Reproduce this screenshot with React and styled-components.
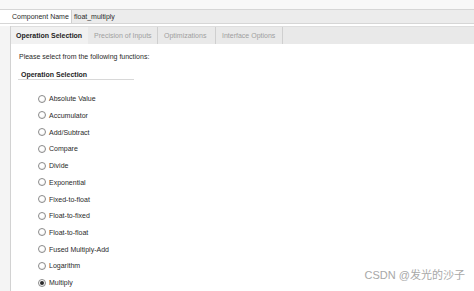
import React from "react";
import styled, { createGlobalStyle } from "styled-components";

const Global = createGlobalStyle`
  html, body { margin: 0; padding: 0; background: #ffffff; }
  body { font-family: "Liberation Sans", Arial, sans-serif; overflow: hidden; }
  * { box-sizing: border-box; }
`;

const Page = styled.div`
  position: relative;
  width: 474px;
  height: 291px;
  display: flex;
  flex-direction: column;
  background: #ffffff;
  overflow: hidden;
`;

const TopStrip = styled.div`
  height: 10px;
  background: #f8f8f8;
`;

const NameRow = styled.div`
  height: 15px;
  display: flex;
  align-items: stretch;
  border-top: 1px solid #d6d6d6;
  border-bottom: 1px solid #d6d6d6;
`;

const NameLabel = styled.div`
  width: 71px;
  padding-left: 12px;
  font-size: 7px;
  line-height: 13px;
  color: #2a2a2a;
  background: #ffffff;
  white-space: nowrap;
`;

const NameInput = styled.div`
  flex: 1;
  background: #ececec;
  border-left: 1px solid #d0d0d0;
  padding-left: 2px;
  font-size: 7px;
  line-height: 13px;
  color: #2a2a2a;
`;

const Spacer = styled.div`
  height: 2px;
`;

const Body = styled.div`
  flex: 1;
  display: flex;
`;

const Gutter = styled.div`
  width: 11px;
  background: #f4f4f4;
  border-right: 1px solid #d2d2d2;
`;

const Main = styled.div`
  flex: 1;
  display: flex;
  flex-direction: column;
`;

const TabBar = styled.div`
  height: 18px;
  display: flex;
  background: #e9e9e9;
  border-top: 1px solid #dedede;
`;

const Tab = styled.div`
  padding: 0 6px 0 ${(p) => (p.$active ? "5px" : "6px")};
  font-size: 7px;
  line-height: 17px;
  white-space: nowrap;
  color: ${(p) => (p.$active ? "#1e1e1e" : "#a0a0a0")};
  font-weight: ${(p) => (p.$active ? 700 : 400)};
  background: ${(p) => (p.$active ? "#f1f1f1" : "transparent")};
  border-right: 1px solid ${(p) => (p.$active ? "transparent" : "#cfcfcf")};
  width: ${(p) => p.$w}px;
`;

const Content = styled.div`
  padding-left: 8px;
  display: flex;
  flex-direction: column;
`;

const Intro = styled.div`
  margin-top: 8px;
  font-size: 7px;
  line-height: 9px;
  color: #2a2a2a;
`;

const SectionTitle = styled.div`
  margin-top: 9px;
  margin-left: -1px;
  width: 116px;
  padding-left: 3px;
  font-size: 7px;
  font-weight: 700;
  line-height: 9px;
  color: #1e1e1e;
  border-bottom: 1px solid #d8d8d8;
`;

const List = styled.div`
  margin-top: 10px;
  margin-left: 19px;
  display: flex;
  flex-direction: column;
`;

const Row = styled.div`
  height: 16.73px;
  display: flex;
  align-items: center;
  gap: 3px;
  font-size: 7px;
  color: #2a2a2a;
`;

const Radio = styled.span`
  width: 8px;
  height: 8px;
  border-radius: 50%;
  border: 1px solid #8a8a8a;
  background: radial-gradient(circle at 40% 35%, #ffffff 40%, #e4e4e4 100%);
  display: flex;
  align-items: center;
  justify-content: center;
  &::after {
    content: "";
    width: 4px;
    height: 4px;
    border-radius: 50%;
    background: ${(p) => (p.$checked ? "#2a2a2a" : "transparent")};
  }
`;

const Watermark = styled.div`
  position: absolute;
  right: 9px;
  bottom: 9px;
  font-family: "Liberation Sans", "Noto Sans CJK SC", sans-serif;
  font-size: 11px;
  color: #a8a8a8;
  white-space: nowrap;
`;

const tabs = [
  { label: "Operation Selection", w: 77, active: true },
  { label: "Precision of Inputs", w: 70 },
  { label: "Optimizations", w: 58 },
  { label: "Interface Options", w: 67 },
];

const options = [
  "Absolute Value",
  "Accumulator",
  "Add/Subtract",
  "Compare",
  "Divide",
  "Exponential",
  "Fixed-to-float",
  "Float-to-fixed",
  "Float-to-float",
  "Fused Multiply-Add",
  "Logarithm",
  "Multiply",
];

export default function App() {
  return (
    <>
      <Global />
      <Page>
        <TopStrip />
        <NameRow>
          <NameLabel>Component Name</NameLabel>
          <NameInput>float_multiply</NameInput>
        </NameRow>
        <Spacer />
        <Body>
          <Gutter />
          <Main>
            <TabBar>
              {tabs.map((t) => (
                <Tab key={t.label} $active={t.active} $w={t.w}>
                  {t.label}
                </Tab>
              ))}
            </TabBar>
            <Content>
              <Intro>Please select from the following functions:</Intro>
              <SectionTitle>Operation Selection</SectionTitle>
              <List>
                {options.map((o) => (
                  <Row key={o}>
                    <Radio $checked={o === "Multiply"} />
                    <span>{o}</span>
                  </Row>
                ))}
              </List>
            </Content>
          </Main>
        </Body>
        <Watermark>CSDN @发光的沙子</Watermark>
      </Page>
    </>
  );
}
